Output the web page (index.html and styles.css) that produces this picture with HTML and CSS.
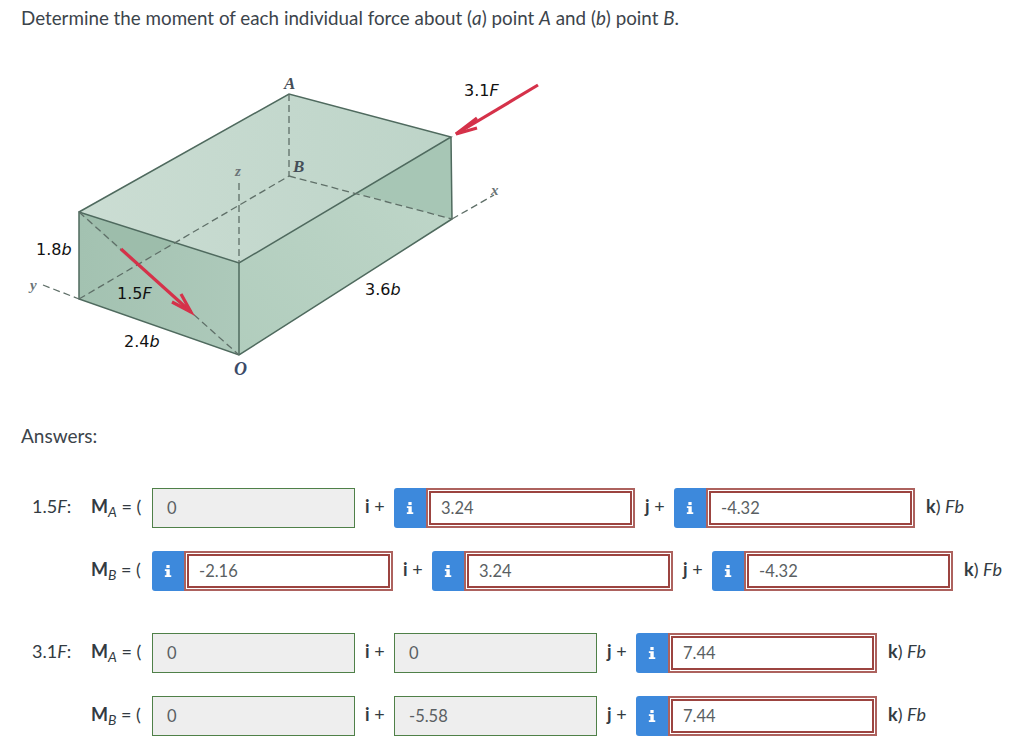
FILE: index.html
```html
<!DOCTYPE html>
<html lang="en">
<head>
<meta charset="utf-8">
<title>Moment of force</title>
<link rel="stylesheet" href="styles.css">
</head>
<body>
<svg class="defs" width="0" height="0" aria-hidden="true">
  <symbol id="info" viewBox="0 0 7 11"><path d="M2 0h3v2.7H2zM.6 4h4.5v5.4h1.4V11H.6V9.4H2V5.6H.6z"/></symbol>
</svg>
<main class="page">
  <p class="question">Determine the moment of each individual force about (<i>a</i>) point <i>A</i> and (<i>b</i>) point <i>B</i>.</p>
  <svg class="figure" width="540" height="342" viewBox="0 0 540 342">
    <defs>
      <linearGradient id="top" x1="0" y1="0" x2="1" y2="0"><stop offset="0" stop-color="#cbddd3"/><stop offset="1" stop-color="#bdd4c8"/></linearGradient>
      <linearGradient id="left" x1="0" y1="0" x2="1" y2="0"><stop offset="0" stop-color="#a3c2b1"/><stop offset="1" stop-color="#adc9ba"/></linearGradient>
      <linearGradient id="right" x1="0" y1="1" x2="1" y2="0"><stop offset="0" stop-color="#b1cdbd"/><stop offset="1" stop-color="#c0d7ca"/></linearGradient>
      <filter id="soft" x="-5%" y="-5%" width="110%" height="110%"><feGaussianBlur stdDeviation="0.5"/></filter>
    </defs>
    <g transform="translate(0,-42)" filter="url(#soft)">
      <polygon points="79,212 289,94 451,137 239,263" fill="url(#top)"/>
      <polygon points="79,212 239,263 239,355 79,299" fill="url(#left)"/>
      <polygon points="239,263 451,137 452,219 239,355" fill="url(#right)"/>
      <polygon points="79,212 175,243 135,265" fill="#9dbdab"/>
      <polygon points="356,193 451,137 452,219" fill="#a7c6b5"/>
      <g class="edges">
        <polyline points="79,212 289,94 451,137 239,263 79,212 79,299 239,355 452,219 451,137"/>
        <line x1="239" y1="263" x2="239" y2="355"/>
      </g>
      <g class="dashes">
        <line x1="79" y1="299" x2="289" y2="176"/>
        <line x1="289" y1="176" x2="452" y2="219"/>
        <line x1="289" y1="94" x2="289" y2="176"/>
        <line x1="239" y1="183" x2="239" y2="263"/>
        <line x1="79" y1="212" x2="239" y2="355"/>
        <line x1="43" y1="285" x2="79" y2="299"/>
        <line x1="452" y1="219" x2="494" y2="195"/>
      </g>
      <g class="arrows">
        <line x1="121" y1="249" x2="191" y2="312"/>
        <polyline points="172,302 191,312 181,294"/>
        <line x1="538" y1="85" x2="456" y2="134"/>
        <polyline points="477,118 456,134 477,128"/>
      </g>
    </g>
    <g class="serif">
      <text x="284" y="47">A</text>
      <text x="293" y="130">B</text>
      <text x="235" y="134" class="small">z</text>
      <text x="491" y="153" class="small">x</text>
      <text x="30" y="248" class="small">y</text>
      <text x="234" y="333" class="origin">O</text>
    </g>
    <g class="dims">
      <text x="36" y="213">1.8<tspan class="it">b</tspan></text>
      <text x="117" y="257">1.5<tspan class="it">F</tspan></text>
      <text x="124" y="305">2.4<tspan class="it">b</tspan></text>
      <text x="365" y="253">3.6<tspan class="it">b</tspan></text>
      <text x="464" y="54">3.1<tspan class="it">F</tspan></text>
    </g>
  </svg>
  <p class="answers">Answers:</p>
  <div class="rows">
    <div class="row">
      <span class="force">1.5<i>F</i>:</span>
      <span class="lhs"><b>M</b><sub>A</sub> = (</span>
      <span class="field ok">0</span>
      <span class="unit"><b>i</b> +</span>
      <span class="hint"><svg class="hint-icon"><use href="#info"/></svg></span><span class="field bad">3.24</span>
      <span class="unit"><b>j</b> +</span>
      <span class="hint"><svg class="hint-icon"><use href="#info"/></svg></span><span class="field bad">-4.32</span>
      <span class="end"><b>k</b>) <i>Fb</i></span>
    </div>
    <div class="row">
      <span class="force"></span>
      <span class="lhs"><b>M</b><sub>B</sub> = (</span>
      <span class="hint"><svg class="hint-icon"><use href="#info"/></svg></span><span class="field bad">-2.16</span>
      <span class="unit"><b>i</b> +</span>
      <span class="hint"><svg class="hint-icon"><use href="#info"/></svg></span><span class="field bad">3.24</span>
      <span class="unit"><b>j</b> +</span>
      <span class="hint"><svg class="hint-icon"><use href="#info"/></svg></span><span class="field bad">-4.32</span>
      <span class="end"><b>k</b>) <i>Fb</i></span>
    </div>
    <div class="row gap">
      <span class="force">3.1<i>F</i>:</span>
      <span class="lhs"><b>M</b><sub>A</sub> = (</span>
      <span class="field ok">0</span>
      <span class="unit"><b>i</b> +</span>
      <span class="field ok">0</span>
      <span class="unit"><b>j</b> +</span>
      <span class="hint"><svg class="hint-icon"><use href="#info"/></svg></span><span class="field bad">7.44</span>
      <span class="end"><b>k</b>) <i>Fb</i></span>
    </div>
    <div class="row">
      <span class="force"></span>
      <span class="lhs"><b>M</b><sub>B</sub> = (</span>
      <span class="field ok">0</span>
      <span class="unit"><b>i</b> +</span>
      <span class="field ok">-5.58</span>
      <span class="unit"><b>j</b> +</span>
      <span class="hint"><svg class="hint-icon"><use href="#info"/></svg></span><span class="field bad">7.44</span>
      <span class="end"><b>k</b>) <i>Fb</i></span>
    </div>
  </div>
</main>
</body>
</html>
```
FILE: styles.css
```css
* { box-sizing: border-box; }
html, body { margin: 0; background: #fff; }
body { font-family: Lato, "Liberation Sans", sans-serif; color: #333b42; font-size: 18px; }
.defs { display: block; height: 0; }
.page { width: 1024px; height: 749px; overflow: hidden; padding: 7px 0 0 21px; }
.question { margin: 0; font-size: 18.8px; line-height: 22px; color: #3c444b; }
.figure { display: block; margin: 13px 0 0 -21px; }
.edges polyline, .edges line { fill: none; stroke: #4f6a5e; stroke-width: 1.5; }
.dashes line { stroke: #5f6f68; stroke-width: 1.3; stroke-dasharray: 7 4; fill: none; }
.arrows line, .arrows polyline { stroke: #d5304a; fill: none; stroke-width: 3.2; }
.serif text { font-family: "Liberation Serif", serif; font-style: italic; font-weight: 700; font-size: 17px; fill: #454e58; }
.serif .small { font-size: 15px; fill: #6b7478; }
.serif .origin { font-size: 18px; fill: #3a4a68; }
.dims text { font-family: "DejaVu Sans", sans-serif; font-size: 16px; fill: #111; }
.dims .it { font-style: italic; }
.answers { margin: 41px 0 0; line-height: 22px; font-size: 19px; color: #3c444b; }
.rows { margin-top: 41px; display: flex; flex-direction: column; gap: 23px; }
.row { display: flex; align-items: center; height: 40px; font-size: 18px; }
.row.gap { margin-top: 19px; }
.force { width: 70px; padding-left: 11px; white-space: nowrap; margin-top: -4px; }
.lhs { width: 61px; white-space: nowrap; margin-top: -4px; }
.lhs b { font-weight: 700; }
sub { font-size: 14px; font-style: italic; line-height: 0; vertical-align: -4px; }
.field { display: flex; align-items: center; height: 40px; width: 203px; padding-left: 14px; font-size: 16.5px; color: #5a5f63; }
.field.ok { background: #eee; border: 1px solid #4f8048; }
.field.bad { width: 209px; background: #fff; border: 2px solid #ad625e; box-shadow: inset 0 0 0 1px #fff, inset 0 0 0 3px #9c4440; padding-left: 13px; }
.unit { width: 39px; padding-left: 10px; white-space: nowrap; margin-top: -4px; }
.end { padding-left: 11px; white-space: nowrap; margin-top: -4px; }
.hint { display: flex; align-items: center; justify-content: center; width: 32px; height: 40px; background: #3d89dc; border-radius: 3px 0 0 3px; color: #fff; }
.hint-icon { width: 8px; height: 12px; fill: #fff; }
```
